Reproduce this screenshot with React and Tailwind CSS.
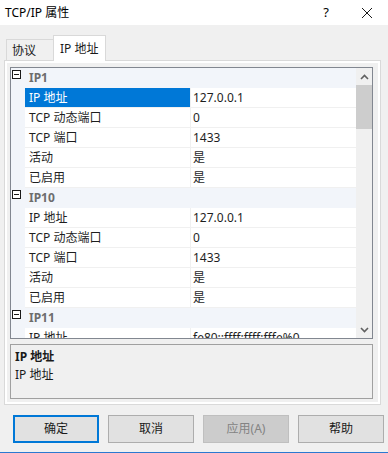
const font = { fontFamily: '"Noto Sans", "Noto Sans CJK SC", sans-serif' };

const groups = [
  {
    name: "IP1",
    rows: [
      ["IP 地址", "127.0.0.1"],
      ["TCP 动态端口", "0"],
      ["TCP 端口", "1433"],
      ["活动", "是"],
      ["已启用", "是"],
    ],
  },
  {
    name: "IP10",
    rows: [
      ["IP 地址", "127.0.0.1"],
      ["TCP 动态端口", "0"],
      ["TCP 端口", "1433"],
      ["活动", "是"],
      ["已启用", "是"],
    ],
  },
  {
    name: "IP11",
    rows: [["IP 地址", "fe80::ffff:ffff:fffe%0"]],
  },
];

function MinusBox() {
  return (
    <div className="w-[9px] h-[9px] border border-[#1a1a1a] bg-white flex items-center justify-center">
      <div className="w-[5px] h-px bg-[#1a1a1a]" />
    </div>
  );
}

function Chevron({ up }) {
  return (
    <svg width="9" height="6" viewBox="0 0 9 6">
      <path
        d={up ? "M1 5 L4.5 1.5 L8 5" : "M1 1 L4.5 4.5 L8 1"}
        fill="none"
        stroke="#606060"
        strokeWidth="1.6"
      />
    </svg>
  );
}

function Grid() {
  let first = true;
  return (
    <div className="w-[363px] h-[272px] border border-[#828790] bg-white flex overflow-hidden">
      <div className="flex-1 flex flex-col overflow-hidden">
        {groups.map((g) => (
          <div key={g.name} className="flex flex-col">
            <div className="h-[20px] shrink-0 bg-[#f2f5fa] flex items-center relative">
              <div className="absolute left-[1px] top-[2px]">
                <MinusBox />
              </div>
              <span className="ml-[18px] text-[12px] font-bold text-[#6d6d6d]">{g.name}</span>
            </div>
            {g.rows.map(([k, v]) => {
              const sel = first;
              first = false;
              return (
                <div key={k} className="h-[20px] shrink-0 flex">
                  <div className="w-[14px] bg-[#f2f5fa]" />
                  <div
                    className={`w-[165px] pl-[4px] flex items-center text-[12px] border-b border-[#f0f0f0] ${
                      sel ? "bg-[#0078d7] text-white border-[#0078d7]" : "text-[#1e1e1e]"
                    }`}
                  >
                    {k}
                  </div>
                  <div className="w-px bg-[#f0f0f0]" />
                  <div className="flex-1 pl-[2px] flex items-center text-[12px] text-[#1e1e1e] border-b border-[#f0f0f0] whitespace-nowrap">
                    {v}
                  </div>
                </div>
              );
            })}
          </div>
        ))}
      </div>
      <div className="w-[16px] bg-[#f0f0f0] flex flex-col">
        <div className="h-[17px] flex items-center justify-center">
          <Chevron up />
        </div>
        <div className="h-[44px] bg-[#cdcdcd]" />
        <div className="flex-1" />
        <div className="h-[17px] flex items-center justify-center">
          <Chevron />
        </div>
      </div>
    </div>
  );
}

function Btn({ children, variant }) {
  const cls =
    variant === "default"
      ? "border-2 border-[#0078d7] bg-[#e1e1e1] text-[#1a1a1a]"
      : variant === "disabled"
      ? "border border-[#bfbfbf] bg-[#cccccc] text-[#838383]"
      : "border border-[#adadad] bg-[#e1e1e1] text-[#1a1a1a]";
  return (
    <div className={`w-[86px] h-[28px] flex items-center justify-center text-[12px] ${cls}`}>
      {children}
    </div>
  );
}

export default function App() {
  return (
    <div className="w-[388px] h-[453px] bg-[#f0f0f0] flex flex-col overflow-hidden" style={font}>
      <div className="h-[25px] shrink-0 bg-white flex items-center text-[12px] text-black">
        <span className="ml-[5px]">TCP/IP 属性</span>
        <span className="ml-auto mr-[32px] text-[13px]">?</span>
        <svg width="12" height="12" viewBox="0 0 12 12" className="mr-[15px]">
          <path d="M1 1 L11 11 M11 1 L1 11" stroke="#1a1a1a" strokeWidth="1" />
        </svg>
      </div>

      <div className="flex items-end pl-[6px] pt-[9px] h-[35px] shrink-0">
        <div className="w-[47px] h-[22px] mb-[-1px] border border-r-0 border-b-0 border-[#d9d9d9] bg-[#f0f0f0] flex items-center pl-[5px] text-[12px] text-[#1a1a1a]">
          协议
        </div>
        <div className="w-[53px] h-[26px] mb-[-1px] relative z-10 border border-b-0 border-[#d9d9d9] bg-white flex items-center pl-[6px] text-[12px] text-[#1a1a1a]">
          IP 地址
        </div>
      </div>

      <div className="ml-[4px] w-[377px] h-[345px] shrink-0 border border-[#d9d9d9] bg-white p-[2px]">
        <div className="w-full h-full bg-[#f0f0f0] pl-[3px] pt-[4px] flex flex-col">
          <Grid />
          <div className="mt-[5px] w-[363px] h-[55px] border border-[#a0a0a0] bg-[#f0f0f0] flex flex-col px-[4px] pt-[3px] text-[12px] text-[#1a1a1a]">
            <span className="font-bold leading-[17px]">IP 地址</span>
            <span className="leading-[17px] mt-[1px]">IP 地址</span>
          </div>
        </div>
      </div>

      <div className="flex gap-[9px] ml-[13px] mt-[10px]">
        <Btn variant="default">确定</Btn>
        <Btn>取消</Btn>
        <Btn variant="disabled">应用(A)</Btn>
        <Btn>帮助</Btn>
      </div>

      <div className="flex-1" />
      <div className="h-px bg-[#2b79d0]" />
    </div>
  );
}
